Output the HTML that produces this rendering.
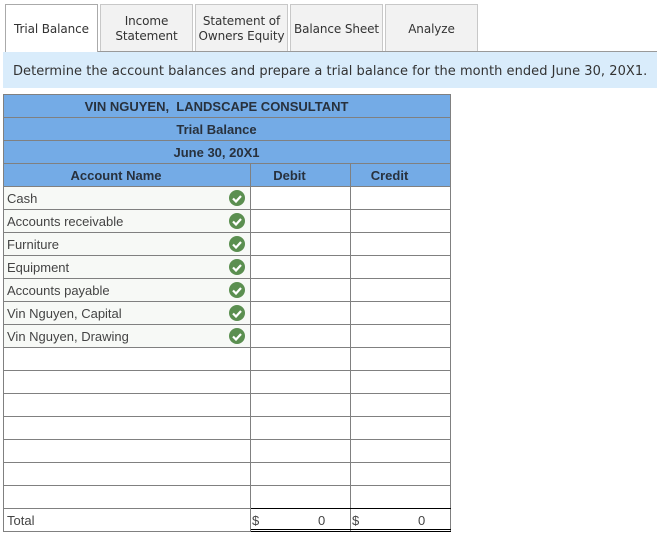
<!DOCTYPE html>
<html><head><meta charset="utf-8">
<style>
html,body{margin:0;padding:0;background:#fff;width:657px;height:537px;overflow:hidden}
div{position:absolute;box-sizing:border-box}
.tab{top:4px;width:93px;height:47px;background:#f2f2f2;border:1px solid #c8c8c8;border-bottom:none;font:12px/15px "DejaVu Sans",sans-serif;color:#333;text-align:center;display:flex;align-items:center;justify-content:center;letter-spacing:-.1px;padding-top:2px}
.h{left:4px;width:446px;background:#74abe6}
.t{font:bold 13px/24px "Liberation Sans",sans-serif;color:#28313d;text-align:center;white-space:nowrap}
.hl{background:#808080;height:1px;left:3px;width:448px}
.vl{background:#808080;width:1px}
.r{left:7px;font:13px/24px "Liberation Sans",sans-serif;color:#444;white-space:nowrap}
svg{position:absolute}
</style></head><body>
<div class="tab" style="left:5px;background:#fff;border-color:#aaa;z-index:2;height:48px">Trial Balance</div>
<div class="tab" style="left:100px">Income<br>Statement</div>
<div class="tab" style="left:195px">Statement of<br>Owners Equity</div>
<div class="tab" style="left:290px">Balance Sheet</div>
<div class="tab" style="left:385px">Analyze</div>
<div style="left:5px;top:51px;width:652px;height:1px;background:#999"></div>
<div style="left:3px;top:52px;width:654px;height:36px;background:#d9ecfb;font:13px/36px 'DejaVu Sans',sans-serif;color:#333;padding-left:10px;padding-top:2px;white-space:nowrap;letter-spacing:.04px">Determine the account balances and prepare a trial balance for the month ended June 30, 20X1.</div>

<div class="h" style="top:95px;height:91px"></div>
<div style="left:4px;top:187px;width:246px;height:161px;background:#f7f9f6"></div>

<div class="t" style="left:4px;width:425px;top:95px">VIN NGUYEN,&nbsp; LANDSCAPE CONSULTANT</div>
<div class="t" style="left:4px;width:425px;top:118px">Trial Balance</div>
<div class="t" style="left:4px;width:425px;top:141px">June 30, 20X1</div>
<div class="t" style="left:4px;width:224px;top:164px">Account Name</div>
<div class="t" style="left:251px;width:77px;top:164px">Debit</div>
<div class="t" style="left:351px;width:77px;top:164px">Credit</div>

<div class="r" style="top:187px">Cash</div>
<div class="r" style="top:210px">Accounts receivable</div>
<div class="r" style="top:233px">Furniture</div>
<div class="r" style="top:256px">Equipment</div>
<div class="r" style="top:279px">Accounts payable</div>
<div class="r" style="top:302px">Vin Nguyen, Capital</div>
<div class="r" style="top:325px">Vin Nguyen, Drawing</div>
<div class="r" style="top:509px">Total</div>

<div class="hl" style="top:94px"></div>
<div class="hl" style="top:117px"></div>
<div class="hl" style="top:140px"></div>
<div class="hl" style="top:163px"></div>
<div class="hl" style="top:186px"></div>
<div class="hl" style="top:209px"></div>
<div class="hl" style="top:232px"></div>
<div class="hl" style="top:255px"></div>
<div class="hl" style="top:278px"></div>
<div class="hl" style="top:301px"></div>
<div class="hl" style="top:324px"></div>
<div class="hl" style="top:347px"></div>
<div class="hl" style="top:370px"></div>
<div class="hl" style="top:393px"></div>
<div class="hl" style="top:416px"></div>
<div class="hl" style="top:439px"></div>
<div class="hl" style="top:462px"></div>
<div class="hl" style="top:485px"></div>
<div class="hl" style="top:508px"></div>
<div class="hl" style="top:531px;width:248px"></div>

<div class="vl" style="left:3px;top:94px;height:438px"></div>
<div class="vl" style="left:450px;top:94px;height:438px"></div>
<div class="vl" style="left:250px;top:163px;height:369px"></div>
<div class="vl" style="left:350px;top:163px;height:369px"></div>

<div style="left:251px;top:508px;width:200px;height:1px;background:#000"></div>
<div style="left:251px;top:529px;width:200px;height:1px;background:#000"></div>
<div style="left:251px;top:531px;width:200px;height:1px;background:#000"></div>

<div class="r" style="left:252px;top:509px">$</div>
<div class="r" style="left:318px;top:509px">0</div>
<div class="r" style="left:352px;top:509px">$</div>
<div class="r" style="left:418px;top:509px">0</div>

<svg width="657" height="537" style="left:0;top:0">
<g fill="#5b8f50">
<circle cx="237" cy="198" r="8"/><circle cx="237" cy="221" r="8"/><circle cx="237" cy="244" r="8"/><circle cx="237" cy="267" r="8"/><circle cx="237" cy="290" r="8"/><circle cx="237" cy="313" r="8"/><circle cx="237" cy="336" r="8"/>
</g>
<g fill="none" stroke="#fff" stroke-width="2.2">
<path d="M233 198.5l3 3 5-5.5"/><path d="M233 221.5l3 3 5-5.5"/><path d="M233 244.5l3 3 5-5.5"/><path d="M233 267.5l3 3 5-5.5"/><path d="M233 290.5l3 3 5-5.5"/><path d="M233 313.5l3 3 5-5.5"/><path d="M233 336.5l3 3 5-5.5"/>
</g>
</svg>
</body></html>
